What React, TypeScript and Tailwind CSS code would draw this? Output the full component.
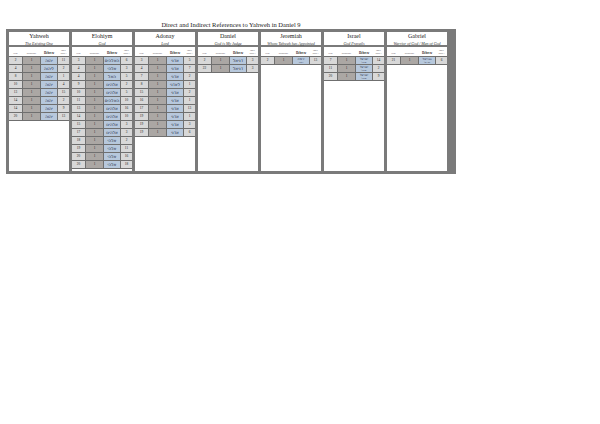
import React from 'react';

type Row = [number, string, number];

interface Column {
  name: string;
  sub: string;
  rows: Row[];
  small?: boolean;
}

const columns: Column[] = [
  {
    name: 'Yahweh',
    sub: 'The Existing One',
    rows: [
      [2, 'יהוה', 11],
      [4, 'ליהוה', 2],
      [8, 'יהוה', 1],
      [10, 'יהוה', 4],
      [13, 'יהוה', 15],
      [14, 'יהוה', 2],
      [14, 'יהוה', 9],
      [20, 'יהוה', 13],
    ],
  },
  {
    name: 'Elohiym',
    sub: 'God',
    rows: [
      [3, 'האלהים', 6],
      [4, 'אלהי', 3],
      [4, 'האל', 5],
      [9, 'אלהינו', 2],
      [10, 'אלהינו', 5],
      [11, 'האלהים', 10],
      [13, 'אלהינו', 16],
      [14, 'אלהינו', 10],
      [15, 'אלהינו', 3],
      [17, 'אלהינו', 3],
      [18, 'אלהי', 2],
      [19, 'אלהי', 11],
      [20, 'אלהי', 16],
      [20, 'אלהי', 18],
    ],
  },
  {
    name: 'Adonay',
    sub: 'Lord',
    rows: [
      [3, 'אדני', 5],
      [4, 'אדני', 7],
      [7, 'אדני', 2],
      [8, 'לאדני', 1],
      [15, 'אדני', 2],
      [16, 'אדני', 1],
      [17, 'אדני', 13],
      [19, 'אדני', 1],
      [19, 'אדני', 3],
      [19, 'אדני', 6],
    ],
  },
  {
    name: 'Daniel',
    sub: 'God is My Judge',
    rows: [
      [2, 'דניאל', 3],
      [22, 'דניאל', 3],
    ],
  },
  {
    name: 'Jeremiah',
    sub: 'Whom Yahweh has Appointed',
    rows: [[2, 'ירמיה', 13]],
    small: true,
  },
  {
    name: 'Israel',
    sub: 'God Prevails',
    rows: [
      [7, 'ישראל', 14],
      [11, 'ישראל', 2],
      [20, 'ישראל', 9],
    ],
    small: true,
  },
  {
    name: 'Gabriel',
    sub: 'Warrior of God / Man of God',
    rows: [[21, 'גבריאל', 6]],
    small: true,
  },
];

const hebrew = { fontFamily: '"DejaVu Sans", "Liberation Sans", sans-serif' };

const NameColumn = ({ col }: { col: Column }) => (
  <div className="flex w-[60px] flex-col bg-white">
    {/* name + meaning */}
    <div className="flex h-[15px] flex-col items-center border-b-2 border-[#7a7a7a] pt-[1px]">
      <div className="text-[6px] leading-[7px] text-[#222]">{col.name}</div>
      <div className="mt-[0.5px] text-[4px] italic leading-[5px] text-[#333]">{col.sub}</div>
    </div>

    {/* column labels */}
    <div className="flex h-[10px] items-end gap-px border-b border-[#6f6f6f] pb-[1px] text-[2.2px] leading-[3px] text-[#444]">
      <div className="w-[13px] text-center">verse</div>
      <div className="w-[17px] text-center">occurrence</div>
      <div className="w-[16px] text-center text-[3px] font-bold text-[#222]">Hebrew</div>
      <div className="flex flex-1 flex-col items-center">
        <span>index</span>
        <span>word #</span>
      </div>
    </div>

    {col.rows.map(([verse, word, idx], i) => (
      <div
        key={i}
        className="flex h-[8px] gap-px border-b border-[#6f6f6f] bg-[#6f6f6f] text-[3.4px] leading-[7px] text-[#222]"
      >
        <div className="w-[13px] bg-[#d8d8d8] text-center">{verse}</div>
        <div className="w-[17px] bg-[#aba7a4] text-center">1</div>
        {col.small ? (
          <div
            dir="rtl"
            style={hebrew}
            className="flex w-[16px] flex-col items-center justify-center bg-[#b7c8dc] text-[3px] leading-[3px] text-[#1c2740]"
          >
            <span>{word}</span>
            <span className="text-[2px] leading-[2px]">{word}</span>
          </div>
        ) : (
          <div
            dir="rtl"
            style={hebrew}
            className="w-[16px] bg-[#b7c8dc] text-center text-[4.2px] text-[#1c2740]"
          >
            {word}
          </div>
        )}
        <div className="flex-1 bg-[#d8d8d8] text-center">{idx}</div>
      </div>
    ))}
  </div>
);

export default function App() {
  return (
    <div
      className="h-[424px] w-[600px] bg-white pl-[6px] pt-[20px]"
      style={{ fontFamily: '"Liberation Serif", "DejaVu Serif", serif' }}
    >
      <div className="w-[450px]">
        <div className="text-center text-[6.5px] leading-[9px] text-[#222]">
          Direct and Indirect References to Yahweh in Daniel 9
        </div>
        <div className="flex h-[145px] gap-[3px] bg-[#7a7a7a] p-[3px]">
          {columns.map((col) => (
            <NameColumn key={col.name} col={col} />
          ))}
        </div>
      </div>
    </div>
  );
}
